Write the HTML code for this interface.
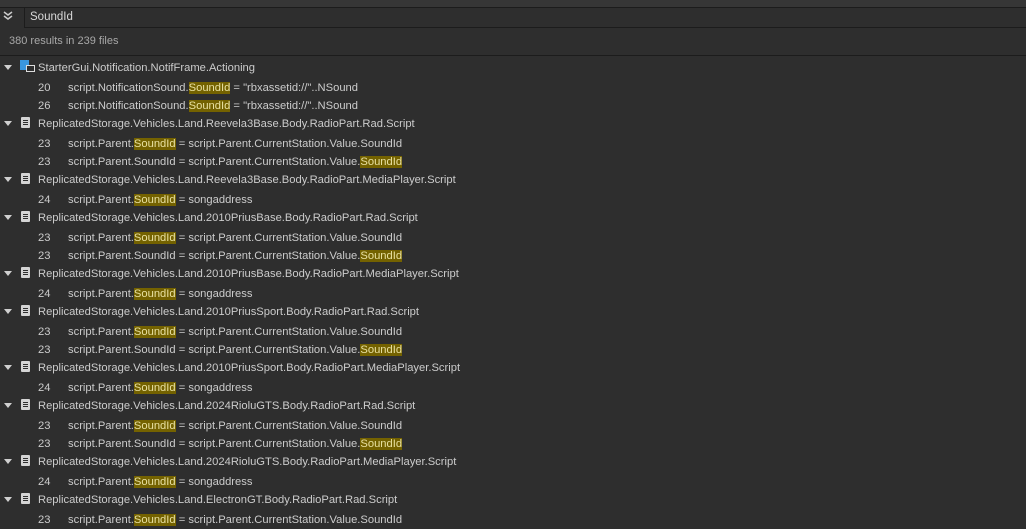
<!DOCTYPE html>
<html><head><style>
body{margin:0;width:1026px;height:519px;overflow:hidden;background:#2e2e2e;font-family:"Liberation Sans",sans-serif;font-size:11.2px;color:#cccccc;position:relative}
.top{position:absolute;left:0;top:0;width:1026px;height:7px;background:#363636;border-bottom:1px solid #1c1c1c}
.inp{position:absolute;left:24px;top:8px;right:0;height:19px;border-left:1px solid #1c1c1c;border-bottom:1px solid #1c1c1c;color:#d8d8d8;padding-left:5px;line-height:19px;font-size:11.5px}
.chev{position:absolute;left:3px;top:11px}
.count{position:absolute;left:9px;top:35px;color:#a8a8a8;font-size:11px}
.sep{position:absolute;left:0;top:55px;width:1026px;height:1px;background:#1c1c1c}
.list{position:absolute;left:0;top:59px;width:1026px}
.h{height:18px;line-height:18px;position:relative;padding-left:38px;margin-bottom:2px;white-space:nowrap}
.c{height:18px;line-height:18px;position:relative;padding-left:38px;white-space:nowrap}
.c .n{display:inline-block;width:30px}
.tri{position:absolute;left:4px;top:6px;width:0;height:0;border-left:4px solid transparent;border-right:4px solid transparent;border-top:5px solid #d0d0d0}
.doc{position:absolute;left:21px;top:2px;width:9px;height:11px;background:#d4d4d4;border-radius:1px}
.doc i{position:absolute;left:2px;width:5px;height:1px;background:#2e2e2e}
.m{background:#746200;color:#e8e0a0}
.lsi{position:absolute;left:20px;top:1px;width:9px;height:10px;background:#3a96dd}
.lsi2{position:absolute;left:26px;top:6px;width:7px;height:5px;border:1px solid #ddd;background:#2e2e2e}
</style></head><body>
<div class="top"></div>
<svg class="chev" width="10" height="10" viewBox="0 0 10 10"><path d="M1 1 L5 4 L9 1 M1 5 L5 8 L9 5" stroke="#ccc" stroke-width="1.5" fill="none"/></svg>
<div class="inp">SoundId</div>
<div class="count">380 results in 239 files</div>
<div class="sep"></div>
<div class="list">
<div class="h"><span class="tri"></span><span class="lsi"></span><span class="lsi2"></span>StarterGui.Notification.NotifFrame.Actioning</div>
<div class="c"><span class="n">20</span>script.NotificationSound.<span class="m">SoundId</span> = "rbxassetid://"..NSound</div>
<div class="c"><span class="n">26</span>script.NotificationSound.<span class="m">SoundId</span> = "rbxassetid://"..NSound</div>
<div class="h"><span class="tri"></span><span class="doc"><i style="top:3px"></i><i style="top:5px"></i><i style="top:7px"></i></span>ReplicatedStorage.Vehicles.Land.Reevela3Base.Body.RadioPart.Rad.Script</div>
<div class="c"><span class="n">23</span>script.Parent.<span class="m">SoundId</span> = script.Parent.CurrentStation.Value.SoundId</div>
<div class="c"><span class="n">23</span>script.Parent.SoundId = script.Parent.CurrentStation.Value.<span class="m">SoundId</span></div>
<div class="h"><span class="tri"></span><span class="doc"><i style="top:3px"></i><i style="top:5px"></i><i style="top:7px"></i></span>ReplicatedStorage.Vehicles.Land.Reevela3Base.Body.RadioPart.MediaPlayer.Script</div>
<div class="c"><span class="n">24</span>script.Parent.<span class="m">SoundId</span> = songaddress</div>
<div class="h"><span class="tri"></span><span class="doc"><i style="top:3px"></i><i style="top:5px"></i><i style="top:7px"></i></span>ReplicatedStorage.Vehicles.Land.2010PriusBase.Body.RadioPart.Rad.Script</div>
<div class="c"><span class="n">23</span>script.Parent.<span class="m">SoundId</span> = script.Parent.CurrentStation.Value.SoundId</div>
<div class="c"><span class="n">23</span>script.Parent.SoundId = script.Parent.CurrentStation.Value.<span class="m">SoundId</span></div>
<div class="h"><span class="tri"></span><span class="doc"><i style="top:3px"></i><i style="top:5px"></i><i style="top:7px"></i></span>ReplicatedStorage.Vehicles.Land.2010PriusBase.Body.RadioPart.MediaPlayer.Script</div>
<div class="c"><span class="n">24</span>script.Parent.<span class="m">SoundId</span> = songaddress</div>
<div class="h"><span class="tri"></span><span class="doc"><i style="top:3px"></i><i style="top:5px"></i><i style="top:7px"></i></span>ReplicatedStorage.Vehicles.Land.2010PriusSport.Body.RadioPart.Rad.Script</div>
<div class="c"><span class="n">23</span>script.Parent.<span class="m">SoundId</span> = script.Parent.CurrentStation.Value.SoundId</div>
<div class="c"><span class="n">23</span>script.Parent.SoundId = script.Parent.CurrentStation.Value.<span class="m">SoundId</span></div>
<div class="h"><span class="tri"></span><span class="doc"><i style="top:3px"></i><i style="top:5px"></i><i style="top:7px"></i></span>ReplicatedStorage.Vehicles.Land.2010PriusSport.Body.RadioPart.MediaPlayer.Script</div>
<div class="c"><span class="n">24</span>script.Parent.<span class="m">SoundId</span> = songaddress</div>
<div class="h"><span class="tri"></span><span class="doc"><i style="top:3px"></i><i style="top:5px"></i><i style="top:7px"></i></span>ReplicatedStorage.Vehicles.Land.2024RioluGTS.Body.RadioPart.Rad.Script</div>
<div class="c"><span class="n">23</span>script.Parent.<span class="m">SoundId</span> = script.Parent.CurrentStation.Value.SoundId</div>
<div class="c"><span class="n">23</span>script.Parent.SoundId = script.Parent.CurrentStation.Value.<span class="m">SoundId</span></div>
<div class="h"><span class="tri"></span><span class="doc"><i style="top:3px"></i><i style="top:5px"></i><i style="top:7px"></i></span>ReplicatedStorage.Vehicles.Land.2024RioluGTS.Body.RadioPart.MediaPlayer.Script</div>
<div class="c"><span class="n">24</span>script.Parent.<span class="m">SoundId</span> = songaddress</div>
<div class="h"><span class="tri"></span><span class="doc"><i style="top:3px"></i><i style="top:5px"></i><i style="top:7px"></i></span>ReplicatedStorage.Vehicles.Land.ElectronGT.Body.RadioPart.Rad.Script</div>
<div class="c"><span class="n">23</span>script.Parent.<span class="m">SoundId</span> = script.Parent.CurrentStation.Value.SoundId</div>
</div>
</body></html>
